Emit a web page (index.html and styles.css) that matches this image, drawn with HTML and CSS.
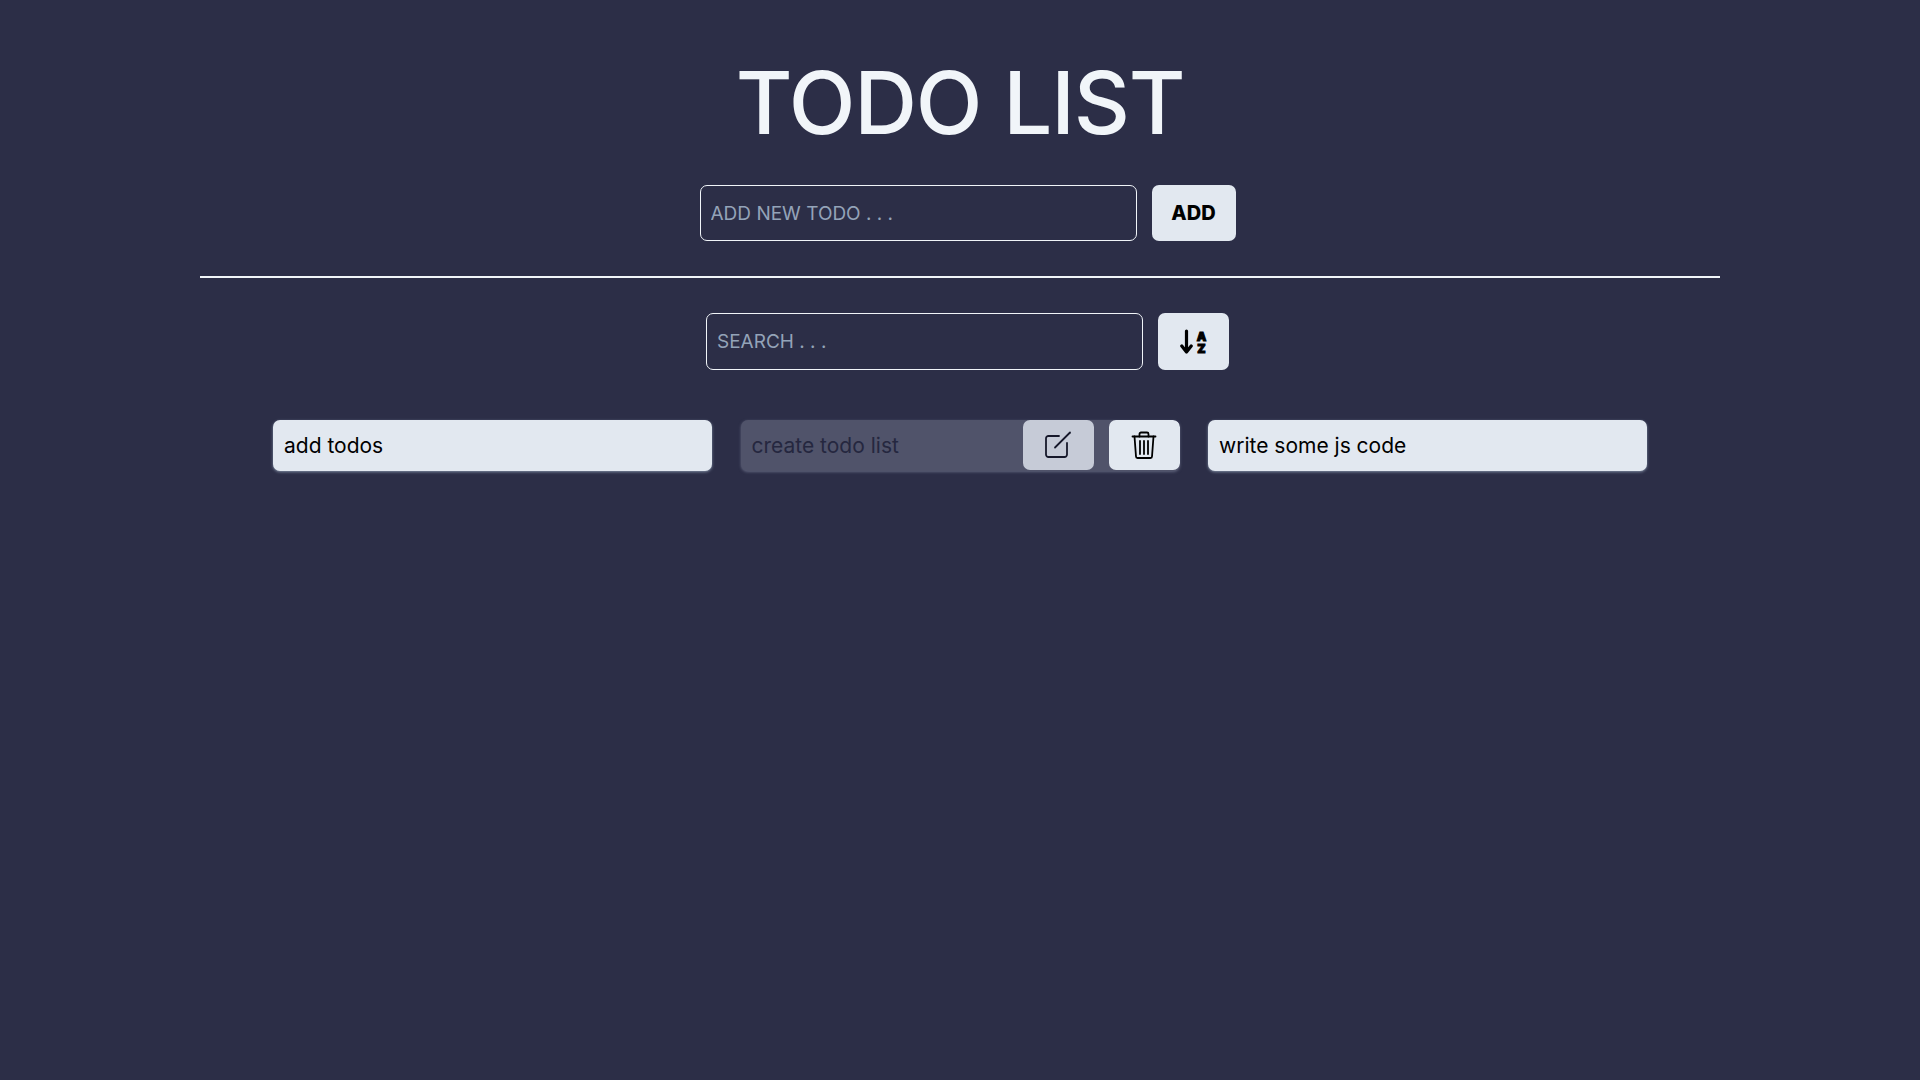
FILE: index.html
```html
<!DOCTYPE html>
<html lang="en">
<head>
    <meta charset="UTF-8">
    <meta name="viewport" content="width=device-width, initial-scale=1.0">
    <title>Todo List</title>
    <link rel="stylesheet" href="styles.css">
</head>
<body>
    <header>
        <h1>TODO LIST</h1>
    </header>

    <main>
        <form class="input-row add-row">
            <input type="text" class="text-input" placeholder="ADD NEW TODO . . .">
            <button type="button" class="row-button add-button">ADD</button>
        </form>

        <hr class="divider">

        <form class="input-row search-row">
            <input type="text" class="text-input" placeholder="SEARCH . . .">
            <button type="button" class="row-button sort-button" aria-label="Sort">
                <svg class="sort-icon" viewBox="0 0 28 28" width="28" height="28">
                    <path d="M6.500 3v21M1.800 18l4.700 6 4.700-6" fill="none" stroke="#000" stroke-width="3.200" stroke-linecap="round" stroke-linejoin="round"/>
                    <text x="21.500" y="12.800" text-anchor="middle" class="sort-letter">A</text>
                    <text x="21.500" y="25" text-anchor="middle" class="sort-letter">Z</text>
                </svg>
            </button>
        </form>

        <ul class="todo-list">
            <li class="todo-item">
                <span class="todo-text">add todos</span>
            </li>
            <li class="todo-item is-hovered">
                <span class="todo-text">create todo list</span>
                <button type="button" class="todo-button edit-button" aria-label="Edit">
                    <svg viewBox="0 0 28 28" width="28" height="28" fill="none" stroke="#16182a" stroke-width="1.800" stroke-linecap="round" stroke-linejoin="round">
                        <path d="M15 5H4.500A2.500 2.500 0 0 0 2 7.500v16A2.500 2.500 0 0 0 4.500 26h16a2.500 2.500 0 0 0 2.500-2.500V12"/>
                        <path d="M11 16.500L26 1.500"/>
                    </svg>
                </button>
                <button type="button" class="todo-button delete-button" aria-label="Delete">
                    <svg viewBox="0 0 28 28" width="28" height="28" fill="none" stroke="#000" stroke-width="1.800" stroke-linecap="round" stroke-linejoin="round">
                        <path d="M2.500 5.500h23"/>
                        <path d="M9.500 5.500V3a1.500 1.500 0 0 1 1.500-1.500h6a1.500 1.500 0 0 1 1.500 1.500v2.500"/>
                        <path d="M4.500 5.500L6 25.500A1.500 1.500 0 0 0 7.500 27h13a1.500 1.500 0 0 0 1.500-1.500l1.500-20"/>
                        <path d="M10 10v13M14 10v13M18 10v13"/>
                    </svg>
                </button>
            </li>
            <li class="todo-item">
                <span class="todo-text">write some js code</span>
            </li>
        </ul>
    </main>
</body>
</html>
```

FILE: styles.css
```css
* {
    box-sizing: border-box;
}

body {
    margin: 0;
    min-height: 1080px;
    background-color: #2c2e47;
    font-family: Inter, "Noto Sans", sans-serif;
}

header {
    padding-top: 53px;
    text-align: center;
}

h1 {
    margin: 0;
    color: #f1f5f9;
    font-size: 87px;
    font-weight: 500;
    letter-spacing: -1.2px;
    line-height: 100px;
}

main {
    width: 1520px;
    margin: 0 auto;
}

.input-row {
    display: flex;
    justify-content: center;
    gap: 15px;
    padding-left: 15px;
}

.add-row {
    margin-top: 32px;
}

.search-row {
    margin-top: 35px;
}

.text-input {
    width: 437px;
    height: 56px;
    padding: 0 10px;
    background: transparent;
    border: 1px solid #f1f5f9;
    border-radius: 7px;
    color: #f1f5f9;
    font-family: inherit;
    font-size: 19px;
}

.search-row .text-input,
.search-row .row-button {
    height: 57px;
}

.text-input::placeholder {
    color: #94a3b8;
    opacity: 1;
}

.row-button {
    height: 56px;
    background-color: #e2e8f0;
    border: none;
    border-radius: 7px;
    color: #000;
    font-family: inherit;
}

.add-button {
    width: 84px;
    font-size: 20px;
    font-weight: 800;
}

.sort-button {
    width: 71px;
    display: flex;
    align-items: center;
    justify-content: center;
}

.sort-letter {
    font-size: 12px;
    font-weight: 900;
    fill: #000;
    stroke: #000;
    stroke-width: 1px;
}

.divider {
    height: 2px;
    margin: 35px 0 0;
    background-color: #f1f5f9;
    border: none;
}

.todo-list {
    display: flex;
    justify-content: center;
    gap: 28.5px;
    margin: 50px 0 0;
    padding: 0;
    list-style: none;
}

.todo-item {
    display: flex;
    align-items: center;
    width: 439px;
    height: 51px;
    background-color: #e2e8f0;
    border-radius: 7px;
    box-shadow: 0 1px 3px rgba(148, 163, 184, 0.8);
    overflow: hidden;
}

.todo-text {
    flex: 1;
    padding-left: 11px;
    color: #000;
    font-size: 21px;
}

.todo-item.is-hovered {
    background-color: #50536a;
    box-shadow: 0 1px 3px rgba(120, 125, 150, 0.7);
}

.is-hovered .todo-text {
    color: #25273f;
}

.todo-button {
    display: flex;
    align-items: center;
    justify-content: center;
    width: 71px;
    height: 50px;
    align-self: flex-start;
    border: none;
    border-radius: 7px;
}

.edit-button {
    background-color: #c6cbd7;
    margin-right: 15px;
}

.delete-button {
    background-color: #e2e8f0;
}
```
